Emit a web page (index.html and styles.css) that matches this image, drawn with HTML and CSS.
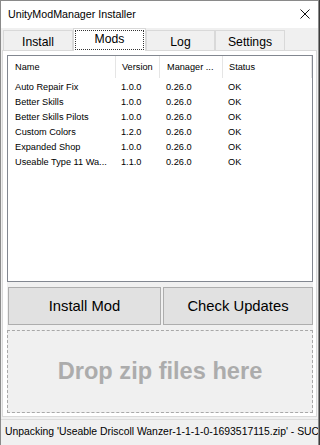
FILE: index.html
```html
<!DOCTYPE html>
<html lang="en">

<head>
    <meta charset="UTF-8">
    <meta name="viewport" content="width=device-width, initial-scale=1.0">
    <title>UnityModManager Installer</title>
    <link rel="stylesheet" href="styles.css">
</head>

<body>
    <div class="window">
        <div class="title-bar">
            <span class="title">UnityModManager Installer</span>
            <svg class="close-icon" width="10" height="10" viewBox="0 0 10 10">
                <path d="M0.5 0.5 L9.5 9.5 M9.5 0.5 L0.5 9.5" stroke="#111" stroke-width="1" fill="none" />
            </svg>
        </div>

        <div class="client">
            <div class="tabs">
                <div class="tab tab-install">Install</div>
                <div class="tab tab-mods selected"><span class="focus-rect">Mods</span></div>
                <div class="tab tab-log">Log</div>
                <div class="tab tab-settings">Settings</div>
            </div>

            <div class="tab-panel">
                <div class="list-view">
                    <div class="list-row list-header">
                        <div class="col col-name">Name</div>
                        <div class="col col-version">Version</div>
                        <div class="col col-manager">Manager ...</div>
                        <div class="col col-status">Status</div>
                    </div>
                    <div class="list-row">
                        <div class="col col-name">Auto Repair Fix</div>
                        <div class="col col-version">1.0.0</div>
                        <div class="col col-manager">0.26.0</div>
                        <div class="col col-status">OK</div>
                    </div>
                    <div class="list-row">
                        <div class="col col-name">Better Skills</div>
                        <div class="col col-version">1.0.0</div>
                        <div class="col col-manager">0.26.0</div>
                        <div class="col col-status">OK</div>
                    </div>
                    <div class="list-row">
                        <div class="col col-name">Better Skills Pilots</div>
                        <div class="col col-version">1.0.0</div>
                        <div class="col col-manager">0.26.0</div>
                        <div class="col col-status">OK</div>
                    </div>
                    <div class="list-row">
                        <div class="col col-name">Custom Colors</div>
                        <div class="col col-version">1.2.0</div>
                        <div class="col col-manager">0.26.0</div>
                        <div class="col col-status">OK</div>
                    </div>
                    <div class="list-row">
                        <div class="col col-name">Expanded Shop</div>
                        <div class="col col-version">1.0.0</div>
                        <div class="col col-manager">0.26.0</div>
                        <div class="col col-status">OK</div>
                    </div>
                    <div class="list-row">
                        <div class="col col-name">Useable Type 11 Wa...</div>
                        <div class="col col-version">1.1.0</div>
                        <div class="col col-manager">0.26.0</div>
                        <div class="col col-status">OK</div>
                    </div>
                </div>

                <div class="lower">
                    <div class="button-row">
                        <button class="btn">Install Mod</button>
                        <button class="btn">Check Updates</button>
                    </div>
                    <div class="drop-zone">Drop zip files here</div>
                </div>
            </div>
        </div>

        <div class="status-bar">Unpacking 'Useable Driscoll Wanzer-1-1-1-0-1693517115.zip' - SUCCESS</div>
    </div>
</body>

</html>
```

FILE: styles.css
```css
* {
    padding: 0;
    margin: 0;
    box-sizing: border-box;
    font-family: "Liberation Sans", Arial, sans-serif;
}

body {
    width: 320px;
    height: 445px;
    background: #3c3c3c;
    overflow: hidden;
}

.window {
    width: 319px;
    height: 445px;
    background: #f0f0f0;
    border: 1px solid #8a8a8a;
    border-bottom: none;
    display: flex;
    flex-direction: column;
    overflow: hidden;
}

.title-bar {
    height: 27px;
    background: #ffffff;
    display: flex;
    align-items: center;
    justify-content: space-between;
    padding: 0 8px 1px 7px;
    flex-shrink: 0;
}

.title {
    font-size: 10.7px;
    color: #000;
}

.close-icon {
    margin-top: -1px;
}

.client {
    flex: 1;
    display: flex;
    flex-direction: column;
}

.tabs {
    height: 22px;
    display: flex;
    align-items: flex-end;
    padding-left: 2px;
}

.tab {
    height: 20px;
    border: 1px solid #d9d9d9;
    border-bottom: none;
    background: #f0f0f0;
    font-size: 12.2px;
    color: #000;
    text-align: center;
    padding-top: 4px;
}

.tab-install {
    width: 70px;
}

.tab-mods {
    width: 73px;
}

.tab-log {
    width: 69px;
}

.tab-settings {
    width: 70px;
}

.tab.selected {
    height: 23px;
    margin-bottom: -1px;
    background: #ffffff;
    position: relative;
    z-index: 1;
    padding: 1px;
}

.focus-rect {
    display: block;
    height: 20px;
    border: 1px dotted #333;
    padding-top: 1px;
}

.tab-panel {
    margin: 0 1px;
    height: 367px;
    border: 1px solid #d9d9d9;
    background: #ffffff;
    padding: 4px 3px 3px 4px;
    display: flex;
    flex-direction: column;
}

.list-view {
    height: 227px;
    border: 1px solid #828790;
    background: #ffffff;
    font-size: 9.2px;
    color: #000;
}

.list-row {
    display: flex;
    height: 15px;
    align-items: center;
}

.list-header {
    height: 23px;
    padding-bottom: 1px;
}

.col {
    white-space: nowrap;
    overflow: hidden;
}

.col-name {
    width: 107px;
    padding-left: 7px;
}

.col-version {
    width: 44px;
    padding-left: 6px;
}

.col-manager {
    width: 63px;
    padding-left: 7px;
}

.col-status {
    width: 89px;
    padding-left: 6px;
}

.list-header .col {
    height: 100%;
    display: flex;
    align-items: center;
    border-right: 1px solid #e5e5e5;
}

.list-header .col-name {
    width: 108px;
}

.list-header .col-version {
    width: 44px;
}

.list-header .col-manager {
    width: 63px;
}

.list-header .col-status {
    width: 89px;
}

.lower {
    flex: 1;
    background: #f0f0f0;
    padding-top: 5px;
    display: flex;
    flex-direction: column;
}

.button-row {
    display: grid;
    grid-template-columns: 153px 150px;
    gap: 2px;
    padding-left: 1px;
    height: 38px;
}

.btn {
    background: #e1e1e1;
    border: 1px solid #adadad;
    font-size: 14.8px;
    color: #000;
}

.drop-zone {
    margin-top: 5px;
    height: 83px;
    border: 1px dashed #a8a8a8;
    display: flex;
    align-items: center;
    justify-content: center;
    font-size: 23.6px;
    font-weight: bold;
    color: #acacac;
    padding-bottom: 1px;
}

.status-bar {
    margin-top: 2px;
    flex: 1;
    border-top: 1px solid #dcdcdc;
    font-size: 10.4px;
    color: #000;
    white-space: nowrap;
    overflow: hidden;
    padding: 6px 0 0 4px;
}
```
